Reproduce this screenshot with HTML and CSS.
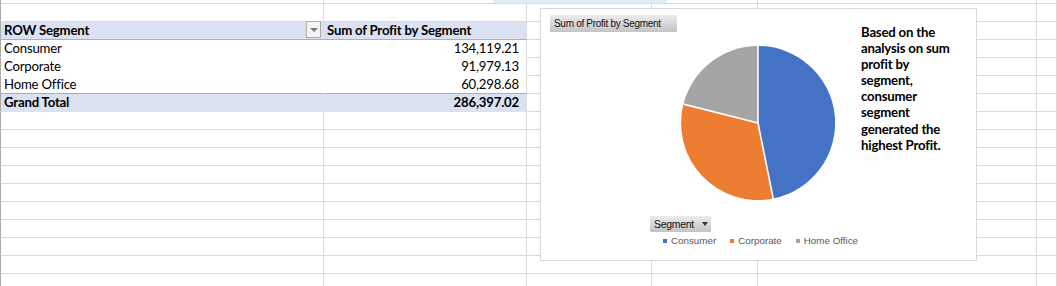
FILE: index.html
```html
<!DOCTYPE html>
<html>
<head>
  <title>Profit by Segment</title>
  <link rel="stylesheet" href="styles.css">
</head>
<body>
  <div class="sheet">
    <div class="sel-strip"></div>

    <div class="row top">
      <div class="cell ca"></div><div class="cell cb"></div><div class="cell cc"></div><div class="cell cd"></div><div class="cell ce"></div><div class="cell cf"></div>
    </div>
    <div class="row">
      <div class="cell ca"></div><div class="cell cb"></div><div class="cell cc"></div><div class="cell cd"></div><div class="cell ce"></div><div class="cell cf"></div>
    </div>

    <!-- pivot table -->
    <div class="row">
      <div class="cell ca pv-head">
        <span>ROW Segment</span>
        <span class="filter-btn"><span class="tri"></span></span>
      </div>
      <div class="cell cb pv-head">Sum of Profit by Segment</div>
      <div class="cell cc"></div><div class="cell cd"></div><div class="cell ce"></div><div class="cell cf"></div>
    </div>
    <div class="row">
      <div class="cell ca pv-row">Consumer</div>
      <div class="cell cb pv-row num">134,119.21</div>
      <div class="cell cc"></div><div class="cell cd"></div><div class="cell ce"></div><div class="cell cf"></div>
    </div>
    <div class="row">
      <div class="cell ca pv-row">Corporate</div>
      <div class="cell cb pv-row num">91,979.13</div>
      <div class="cell cc"></div><div class="cell cd"></div><div class="cell ce"></div><div class="cell cf"></div>
    </div>
    <div class="row">
      <div class="cell ca pv-row pv-last">Home Office</div>
      <div class="cell cb pv-row pv-last num">60,298.68</div>
      <div class="cell cc"></div><div class="cell cd"></div><div class="cell ce"></div><div class="cell cf"></div>
    </div>
    <div class="row">
      <div class="cell ca pv-total">Grand Total</div>
      <div class="cell cb pv-total num">286,397.02</div>
      <div class="cell cc"></div><div class="cell cd"></div><div class="cell ce"></div><div class="cell cf"></div>
    </div>

    <div class="row"><div class="cell ca"></div><div class="cell cb"></div><div class="cell cc"></div><div class="cell cd"></div><div class="cell ce"></div><div class="cell cf"></div></div>
    <div class="row"><div class="cell ca"></div><div class="cell cb"></div><div class="cell cc"></div><div class="cell cd"></div><div class="cell ce"></div><div class="cell cf"></div></div>
    <div class="row"><div class="cell ca"></div><div class="cell cb"></div><div class="cell cc"></div><div class="cell cd"></div><div class="cell ce"></div><div class="cell cf"></div></div>
    <div class="row"><div class="cell ca"></div><div class="cell cb"></div><div class="cell cc"></div><div class="cell cd"></div><div class="cell ce"></div><div class="cell cf"></div></div>
    <div class="row"><div class="cell ca"></div><div class="cell cb"></div><div class="cell cc"></div><div class="cell cd"></div><div class="cell ce"></div><div class="cell cf"></div></div>
    <div class="row"><div class="cell ca"></div><div class="cell cb"></div><div class="cell cc"></div><div class="cell cd"></div><div class="cell ce"></div><div class="cell cf"></div></div>
    <div class="row"><div class="cell ca"></div><div class="cell cb"></div><div class="cell cc"></div><div class="cell cd"></div><div class="cell ce"></div><div class="cell cf"></div></div>
    <div class="row"><div class="cell ca"></div><div class="cell cb"></div><div class="cell cc"></div><div class="cell cd"></div><div class="cell ce"></div><div class="cell cf"></div></div>
    <div class="row"><div class="cell ca"></div><div class="cell cb"></div><div class="cell cc"></div><div class="cell cd"></div><div class="cell ce"></div><div class="cell cf"></div></div>
    <div class="row"><div class="cell ca"></div><div class="cell cb"></div><div class="cell cc"></div><div class="cell cd"></div><div class="cell ce"></div><div class="cell cf"></div></div>

    <!-- pivot chart floating over the cells -->
    <div class="chart">
      <div class="chart-left">
        <div class="field-btn title-btn">Sum of Profit by Segment</div>

        <svg class="pie" width="154" height="154" viewBox="0 0 154 154">
          <path d="M77,77 L77,0 A77,77 0 0 1 92.2,152.5 Z" fill="#4472C4"/>
          <path d="M77,77 L92.2,152.5 A77,77 0 0 1 2.4,58.1 Z" fill="#ED7D31"/>
          <path d="M77,77 L2.4,58.1 A77,77 0 0 1 77,0 Z" fill="#A5A5A5"/>
          <g stroke="#fff" stroke-width="1.6" stroke-linecap="round">
            <line x1="77" y1="77" x2="77" y2="0"/>
            <line x1="77" y1="77" x2="92.2" y2="152.5"/>
            <line x1="77" y1="77" x2="2.4" y2="58.1"/>
          </g>
        </svg>

        <div class="field-btn seg-btn">Segment <span class="dark-tri"></span></div>

        <div class="legend">
          <span class="key"><i class="sw blue"></i>Consumer</span>
          <span class="key"><i class="sw orange"></i>Corporate</span>
          <span class="key"><i class="sw grey"></i>Home Office</span>
        </div>
      </div>

      <div class="note">Based on the analysis on sum profit by segment, consumer segment generated the highest Profit.</div>
    </div>
  </div>
</body>
</html>
```

FILE: styles.css
```css
body {
  margin: 0;
  padding: 0;
  background: #fff;
  font-family: Lato, "Liberation Sans", sans-serif;
  overflow: hidden;
}

.sheet {
  position: relative;
  width: 1057px;
  height: 286px;
  overflow: hidden;
}

.row {
  display: flex;
  height: 18px;
}

.row.top {
  height: 4px;
}

.cell {
  box-sizing: border-box;
  height: 100%;
  border-right: 1px solid #dadada;
  border-bottom: 1px solid #dadada;
  font-size: 13.2px;
  letter-spacing: -0.2px;
  line-height: 17px;
  padding-left: 3px;
  color: #000;
  white-space: nowrap;
}

.ca { width: 324px; border-left: 1px solid #a8a8a8; }
.cb { width: 203px; }
.cc { width: 125px; }
.cd { width: 106px; }
.ce { width: 279px; }
.cf { flex: 1; }

.sel-strip {
  position: absolute;
  left: 493px;
  top: 0;
  width: 174px;
  height: 3px;
  background: #e3edf8;
}

/* pivot table */
.pv-head {
  background: #d9e1f2;
  font-weight: bold;
  border-bottom-color: #9bb1d8;
}

.ca.pv-head {
  display: flex;
  justify-content: space-between;
  border-right-color: #d9e1f2;
  padding-right: 2px;
}

.filter-btn {
  box-sizing: border-box;
  width: 15px;
  height: 17px;
  margin-top: -1px;
  border: 1px solid #acacac;
  background: #f4f4f4;
  display: flex;
  align-items: center;
  justify-content: center;
}

.tri {
  width: 0;
  height: 0;
  border-left: 4px solid transparent;
  border-right: 4px solid transparent;
  border-top: 4px solid #7a7a7a;
}

.pv-row {
  border-bottom-color: #fff;
}

.ca.pv-row {
  border-right-color: #fff;
}

.pv-row.pv-last {
  border-bottom-color: #9bb1d8;
}

.pv-total {
  background: #d9e1f2;
  font-weight: bold;
  border-bottom-color: #d9e1f2;
}

.ca.pv-total {
  border-right-color: #d9e1f2;
}

.num {
  text-align: right;
  padding-right: 7px;
}

/* chart */
.chart {
  position: absolute;
  left: 540px;
  top: 8px;
  width: 437px;
  height: 253px;
  box-sizing: border-box;
  border: 1px solid #d9d9d9;
  background: #fff;
  display: flex;
}

.chart-left {
  width: 320px;
  display: flex;
  flex-direction: column;
  align-items: flex-start;
}

.field-btn {
  box-sizing: border-box;
  height: 17px;
  background: linear-gradient(#ececec, #c4c4c4);
  font-family: "Liberation Sans", sans-serif;
  font-size: 10px;
  line-height: 17px;
  color: #111;
  padding-left: 4px;
  white-space: nowrap;
}

.title-btn {
  width: 127px;
  margin: 6px 0 0 9px;
  letter-spacing: -0.3px;
}

.pie {
  display: block;
  margin: 14px 0 0 140px;
}

.seg-btn {
  width: 61px;
  height: 16px;
  line-height: 16px;
  margin: 16px 0 0 109px;
  display: flex;
  align-items: center;
  gap: 8px;
  font-size: 10.5px;
  letter-spacing: -0.3px;
}

.dark-tri {
  width: 0;
  height: 0;
  border-left: 3.5px solid transparent;
  border-right: 3.5px solid transparent;
  border-top: 4px solid #333;
}

.legend {
  display: flex;
  gap: 14px;
  margin: 3px 0 0 122px;
  font-family: "Liberation Sans", sans-serif;
  font-size: 9.8px;
  line-height: 12px;
  color: #595959;
  white-space: nowrap;
}

.key {
  display: flex;
  align-items: center;
  gap: 4px;
}

.sw {
  display: inline-block;
  width: 4px;
  height: 4px;
}

.sw.blue { background: #4472c4; }
.sw.orange { background: #ed7d31; }
.sw.grey { background: #a5a5a5; }

.note {
  width: 92px;
  padding-top: 15px;
  font-size: 13.2px;
  letter-spacing: -0.2px;
  font-weight: bold;
  line-height: 16.1px;
  color: #000;
}
```
